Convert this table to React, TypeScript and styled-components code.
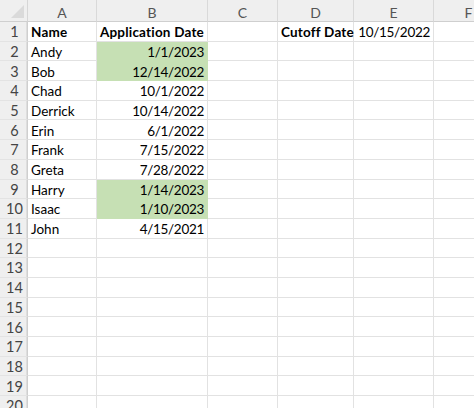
import React from "react";
import styled, { createGlobalStyle } from "styled-components";

const Global = createGlobalStyle`
  html, body { margin: 0; padding: 0; background: #ffffff; }
  body { width: 474px; height: 408px; overflow: hidden; }
`;

const COLS = [28, 69, 111, 70, 76, 80, 70];
const LETTERS = ["A", "B", "C", "D", "E", "F"];
const ROW_H = 19.7;
const ROWS = 20;

const Sheet = styled.div`
  display: grid;
  grid-template-columns: ${COLS.map((c) => c + "px").join(" ")};
  grid-template-rows: 22px repeat(${ROWS}, ${ROW_H}px);
  width: 474px;
  height: 408px;
  overflow: hidden;
  font-family: "Lato", "Open Sans", sans-serif;
  font-size: 13.5px;
  color: #000;
`;

const Corner = styled.div`
  position: relative;
  background: #efefef;
  border-right: 1px solid #d6d6d6;
  border-bottom: 1px solid #cfcfcf;
  box-sizing: border-box;
`;

const CornerTriangle = styled.div`
  position: absolute;
  right: 3px;
  bottom: 3px;
  width: 0;
  height: 0;
  border-left: 13px solid transparent;
  border-bottom: 13px solid #dadada;
`;

const ColHead = styled.div`
  display: flex;
  align-items: center;
  justify-content: center;
  background: #efefef;
  color: #555;
  font-size: 14px;
  border-right: 1px solid #d9d9d9;
  border-bottom: 1px solid #cfcfcf;
  box-sizing: border-box;
  padding-top: 3px;
`;

const RowHead = styled.div`
  display: flex;
  align-items: flex-end;
  justify-content: center;
  background: #efefef;
  color: #444;
  font-size: 14.5px;
  border-right: 1px solid #cfcfcf;
  border-bottom: 1px solid #e3e3e3;
  box-sizing: border-box;
  padding-bottom: 1px;
  padding-left: 2px;
  line-height: 1;
  box-shadow: inset -1px 0 0 #dedede;
`;

const Cell = styled.div<{ $align?: "left" | "right"; $bold?: boolean; $green?: boolean }>`
  display: flex;
  align-items: flex-end;
  justify-content: ${(p) => (p.$align === "right" ? "flex-end" : "flex-start")};
  padding: 0 3px 1px 3px;
  background: ${(p) => (p.$green ? "#c6e0b4" : "#ffffff")};
  border-right: 1px solid ${(p) => (p.$green ? "#c6e0b4" : "#e2e2e2")};
  border-bottom: 1px solid ${(p) => (p.$green ? "#c6e0b4" : "#e2e2e2")};
  box-sizing: border-box;
  font-weight: ${(p) => (p.$bold ? 700 : 400)};
  letter-spacing: ${(p) => (p.$bold ? "0.2px" : p.$align === "right" ? "-0.3px" : "0")};
  white-space: nowrap;
  line-height: 1;
  overflow: visible;
`;

type C = { t?: string; align?: "left" | "right"; bold?: boolean; green?: boolean };

const data: C[][] = [
  [{ t: "Name", bold: true }, { t: "Application Date", bold: true, align: "right" }, {}, { t: "Cutoff Date", bold: true }, { t: "10/15/2022", align: "right" }, {}],
  [{ t: "Andy" }, { t: "1/1/2023", align: "right", green: true }],
  [{ t: "Bob" }, { t: "12/14/2022", align: "right", green: true }],
  [{ t: "Chad" }, { t: "10/1/2022", align: "right" }],
  [{ t: "Derrick" }, { t: "10/14/2022", align: "right" }],
  [{ t: "Erin" }, { t: "6/1/2022", align: "right" }],
  [{ t: "Frank" }, { t: "7/15/2022", align: "right" }],
  [{ t: "Greta" }, { t: "7/28/2022", align: "right" }],
  [{ t: "Harry" }, { t: "1/14/2023", align: "right", green: true }],
  [{ t: "Isaac" }, { t: "1/10/2023", align: "right", green: true }],
  [{ t: "John" }, { t: "4/15/2021", align: "right" }],
];

export default function App() {
  const rows = [];
  for (let r = 0; r < ROWS; r++) {
    const rowData = data[r] || [];
    rows.push(<RowHead key={"h" + r}>{r + 1}</RowHead>);
    for (let c = 0; c < LETTERS.length; c++) {
      const cell = rowData[c] || {};
      rows.push(
        <Cell key={r + "-" + c} $align={cell.align} $bold={cell.bold} $green={cell.green}>
          {cell.t}
        </Cell>
      );
    }
  }
  return (
    <>
      <Global />
      <Sheet>
        <Corner>
          <CornerTriangle />
        </Corner>
        {LETTERS.map((l) => (
          <ColHead key={l}>{l}</ColHead>
        ))}
        {rows}
      </Sheet>
    </>
  );
}
